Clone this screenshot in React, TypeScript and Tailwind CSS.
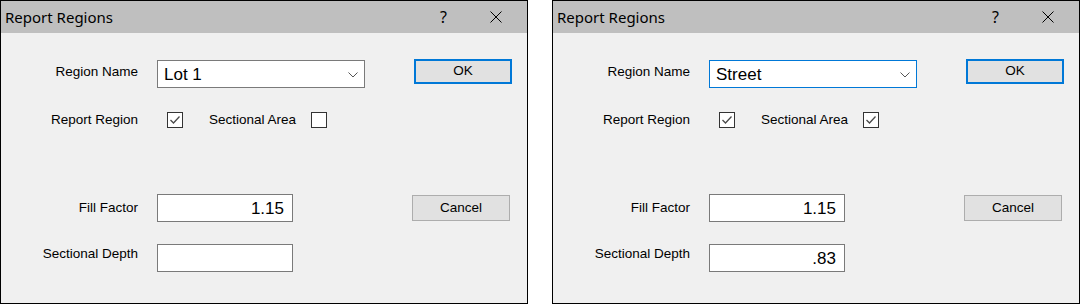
import React from "react";

const labelFont = { fontFamily: '"Liberation Sans", Arial, sans-serif' };

function Check({ checked }: { checked: boolean }) {
  return (
    <div className="w-[16px] h-[16px] border border-[#333333] bg-white flex items-center justify-center shrink-0">
      {checked && (
        <svg width="14" height="14" viewBox="0 0 14 14">
          <polyline points="2.5,7 5.5,10 11.5,3.5" fill="none" stroke="#4a4a4a" strokeWidth="1.3" />
        </svg>
      )}
    </div>
  );
}

function Dialog({
  name,
  focused,
  sectional,
  depth,
}: {
  name: string;
  focused: boolean;
  sectional: boolean;
  depth: string;
}) {
  return (
    <div className="w-[528px] h-[304px] border border-black flex flex-col bg-[#f0f0f0] shrink-0">
      <div className="h-[32px] bg-[#bfbfbf] flex items-center shrink-0">
        <span
          className="ml-[4px] text-[15px] text-black leading-none"
          style={{ fontFamily: '"Noto Sans", "Open Sans", sans-serif' }}
        >
          Report Regions
        </span>
        <span
          className="ml-auto text-[16px] text-black leading-none mr-[43px]"
          style={{ fontFamily: '"Noto Sans", sans-serif' }}
        >
          ?
        </span>
        <svg width="12" height="12" viewBox="0 0 12 12" className="mr-[25px]">
          <line x1="0.5" y1="0.5" x2="11.5" y2="11.5" stroke="#000" strokeWidth="1" />
          <line x1="11.5" y1="0.5" x2="0.5" y2="11.5" stroke="#000" strokeWidth="1" />
        </svg>
      </div>
      <div className="flex flex-col text-[13.5px] text-black" style={labelFont}>
        {/* Row 1 */}
        <div className="flex items-center h-[28px] mt-[27px]">
          <div className="w-[137px] text-right -mt-[3px]">Region Name</div>
          <div
            className={
              focused
                ? "ml-[19px] w-[208px] h-[28px] bg-white border border-[#0078d7] flex items-center"
                : "ml-[19px] w-[208px] h-[28px] bg-white border border-[#7a7a7a] flex items-center"
            }
          >
            <span className="ml-[6px] text-[17px] leading-none">{name}</span>
            <svg width="10" height="6" viewBox="0 0 10 6" className="ml-auto mr-[6px] mt-[2px]">
              <polyline points="0.5,0.5 5,5 9.5,0.5" fill="none" stroke="#555" strokeWidth="1" />
            </svg>
          </div>
          <div className="ml-[49px] w-[98px] h-[25px] self-start -mt-[1px] border-2 border-[#0078d7] bg-[#e1e1e1] flex items-center justify-center text-[13.5px]">
            OK
          </div>
        </div>
        {/* Row 2 */}
        <div className="flex items-center h-[16px] mt-[24px]">
          <div className="w-[137px] text-right">Report Region</div>
          <div className="ml-[29px]">
            <Check checked={true} />
          </div>
          <div className="ml-[26px] w-[88px] whitespace-nowrap">Sectional Area</div>
          <div className="ml-[14px]">
            <Check checked={sectional} />
          </div>
        </div>
        {/* Row 3 */}
        <div className="flex items-center h-[28px] mt-[66px]">
          <div className="w-[137px] text-right">Fill Factor</div>
          <div className="ml-[19px] w-[136px] h-[28px] bg-white border border-[#7a7a7a] flex items-center justify-end">
            <span className="mr-[8px] text-[17px] leading-none">1.15</span>
          </div>
          <div className="ml-[119px] w-[98px] h-[26px] border border-[#adadad] bg-[#e1e1e1] flex items-center justify-center">
            Cancel
          </div>
        </div>
        {/* Row 4 */}
        <div className="flex items-center h-[28px] mt-[22px]">
          <div className="w-[137px] text-right -mt-[8px]">Sectional Depth</div>
          <div className="ml-[19px] w-[136px] h-[28px] bg-white border border-[#7a7a7a] flex items-center justify-end">
            <span className="mr-[8px] text-[17px] leading-none">{depth}</span>
          </div>
        </div>
      </div>
    </div>
  );
}

export default function App() {
  return (
    <div className="w-[1080px] h-[307px] bg-white flex gap-[24px]">
      <Dialog name="Lot 1" focused={false} sectional={false} depth="" />
      <Dialog name="Street" focused={true} sectional={true} depth=".83" />
    </div>
  );
}
